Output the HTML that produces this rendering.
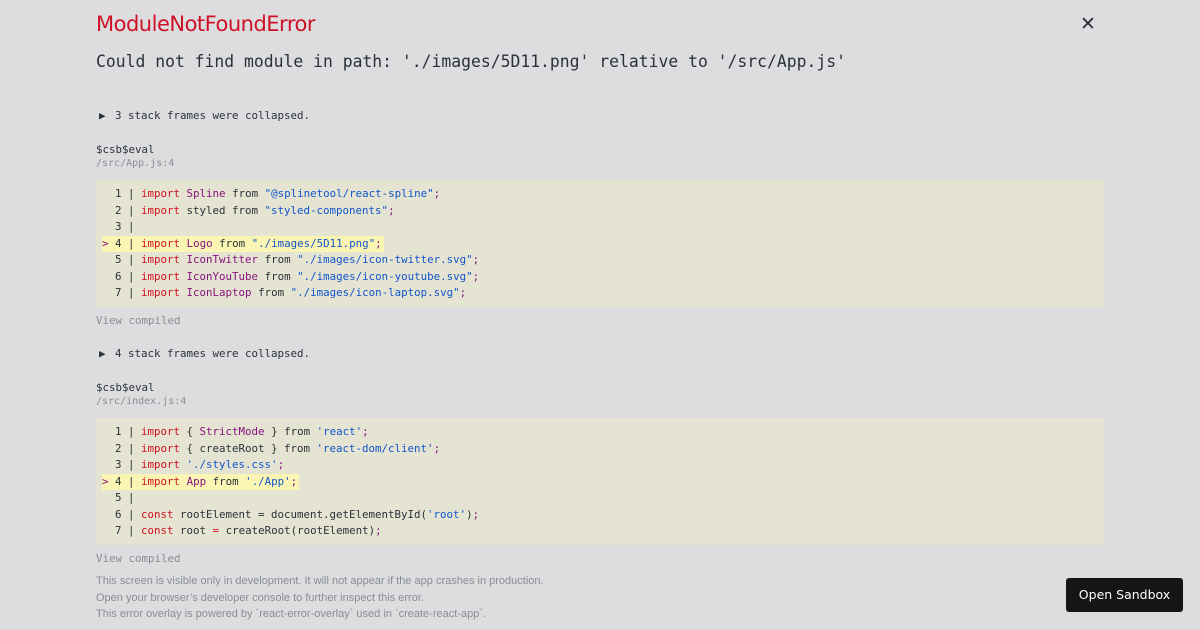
<!DOCTYPE html>
<html><head><meta charset="utf-8"><style>
body{margin:0;width:1200px;height:630px;overflow:hidden;background:#dddde0;font-family:"DejaVu Sans Mono",monospace;color:#293238;position:relative}
.t{position:absolute;left:96px;top:12px;font-family:"DejaVu Sans","Liberation Sans",sans-serif;font-size:21px;color:#ce1126;letter-spacing:-0.5px}
.x{position:absolute;left:1080px;top:13px;font-family:"DejaVu Sans",sans-serif;font-size:19px;color:#293238}
.m{position:absolute;left:96px;top:52px;font-size:16.4px;white-space:pre}
.s{position:absolute;left:96px;font-size:10.8px;white-space:pre}
.g{color:#878e91}
.code{position:absolute;left:96px;width:1008px;background:#e5e4d2;font-size:10.8px;line-height:16.5px;padding:6px 0 5px;white-space:pre}
.code div{padding-left:6px}
.hl{background:#fbf5b4;display:inline-block;padding-right:2px}
.k{color:#d01020}.v{color:#881280}.str{color:#1155cc}.p{color:#881280}
.f{position:absolute;left:96px;top:573px;font-family:"Liberation Sans",sans-serif;font-size:11px;line-height:16.5px;color:#878e91}
.b{position:absolute;left:1066px;top:578px;width:117px;height:34px;background:#151515;border-radius:3px;color:#fff;font-family:"DejaVu Sans",sans-serif;font-size:12.5px;line-height:34px;text-align:center}
</style></head><body>
<div class="t">ModuleNotFoundError</div>
<div class="x">✕</div>
<div class="m">Could not find module in path: './images/5D11.png' relative to '/src/App.js'</div>
<div class="s" style="top:109px"><span style="margin-left:3px;margin-right:3px">▶</span> 3 stack frames were collapsed.</div>
<div class="s" style="top:143px">$csb$eval</div>
<div class="s g" style="top:158px;font-size:10px">/src/App.js:4</div>
<div class="code" style="top:180px"><div>  1 | <span class="k">import</span> <span class="v">Spline</span> from <span class="str">"@splinetool/react-spline"</span><span class="p">;</span></div><div>  2 | <span class="k">import</span> styled from <span class="str">"styled-components"</span><span class="p">;</span></div><div>  3 |</div><div><span class="hl"><span class="v">&gt;</span> 4 | <span class="k">import</span> <span class="v">Logo</span> from <span class="str">"./images/5D11.png"</span><span class="p">;</span></span></div><div>  5 | <span class="k">import</span> <span class="v">IconTwitter</span> from <span class="str">"./images/icon-twitter.svg"</span><span class="p">;</span></div><div>  6 | <span class="k">import</span> <span class="v">IconYouTube</span> from <span class="str">"./images/icon-youtube.svg"</span><span class="p">;</span></div><div>  7 | <span class="k">import</span> <span class="v">IconLaptop</span> from <span class="str">"./images/icon-laptop.svg"</span><span class="p">;</span></div></div>
<div class="s g" style="top:314px">View compiled</div>
<div class="s" style="top:347px"><span style="margin-left:3px;margin-right:3px">▶</span> 4 stack frames were collapsed.</div>
<div class="s" style="top:381px">$csb$eval</div>
<div class="s g" style="top:396px;font-size:10px">/src/index.js:4</div>
<div class="code" style="top:418px"><div>  1 | <span class="k">import</span> { <span class="v">StrictMode</span> } from <span class="str">'react'</span><span class="p">;</span></div><div>  2 | <span class="k">import</span> { createRoot } from <span class="str">'react-dom/client'</span><span class="p">;</span></div><div>  3 | <span class="k">import</span> <span class="str">'./styles.css'</span><span class="p">;</span></div><div><span class="hl"><span class="v">&gt;</span> 4 | <span class="k">import</span> <span class="v">App</span> from <span class="str">'./App'</span><span class="p">;</span></span></div><div>  5 |</div><div>  6 | <span class="k">const</span> rootElement = document.getElementById(<span class="str">'root'</span>)<span class="p">;</span></div><div>  7 | <span class="k">const</span> root <span class="k">=</span> createRoot(rootElement)<span class="p">;</span></div></div>
<div class="s g" style="top:552px">View compiled</div>
<div class="f">This screen is visible only in development. It will not appear if the app crashes in production.<br>Open your browser’s developer console to further inspect this error.<br>This error overlay is powered by `react-error-overlay` used in `create-react-app`.</div>
<div class="b">Open Sandbox</div>
</body></html>
